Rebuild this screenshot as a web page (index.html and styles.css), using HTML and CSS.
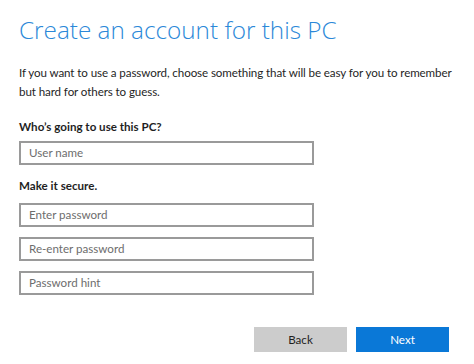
FILE: index.html
```html
<!DOCTYPE html>
<html>
<head>
<meta charset="utf-8">
<link rel="stylesheet" href="styles.css">
</head>
<body>
<main class="page">
  <h1 class="title">Create an account for this PC</h1>
  <p class="intro">If you want to use a password, choose something that will be easy for you to remember but hard for others to guess.</p>
  <h2 class="label">Who’s going to use this PC?</h2>
  <div class="field">User name</div>
  <h2 class="label label-secure">Make it secure.</h2>
  <div class="fields">
    <div class="field">Enter password</div>
    <div class="field">Re-enter password</div>
    <div class="field">Password hint</div>
  </div>
  <div class="actions">
    <button class="btn btn-back">Back</button>
    <button class="btn btn-next">Next</button>
  </div>
</main>
</body>
</html>
```
FILE: styles.css
```css
html, body {
  margin: 0;
  padding: 0;
  background: #ffffff;
}
body {
  width: 474px;
  height: 364px;
  overflow: hidden;
  font-family: "Lato", "Open Sans", sans-serif;
  color: #1f1f1f;
}
.page {
  padding: 12.5px 0 0 19px;
  display: flex;
  flex-direction: column;
}
.title {
  margin: 0;
  font-family: "Open Sans", "Noto Sans", sans-serif;
  font-size: 24.3px;
  font-weight: 300;
  line-height: 34px;
  color: #2b88d8;
}
.intro {
  margin: 16.5px 0 0 0;
  font-size: 11.6px;
  letter-spacing: -0.1px;
  line-height: 19px;
  width: 450px;
}
.label {
  margin: 17.5px 0 0 0;
  font-size: 11.6px;
  font-weight: 700;
  line-height: 16px;
}
.label-secure {
  margin-top: 12.5px;
}
.field {
  box-sizing: border-box;
  width: 295px;
  height: 24px;
  border: 2px solid #9a9a9a;
  margin-top: 6.5px;
  padding: 0 0 0 8px;
  font-size: 11.6px;
  line-height: 20px;
  color: #6d6d6d;
}
.fields {
  display: flex;
  flex-direction: column;
  gap: 10px;
  margin-top: 9.5px;
}
.fields .field {
  margin-top: 0;
}
.actions {
  display: flex;
  gap: 9px;
  margin: 32px 0 0 235px;
}
.btn {
  width: 93px;
  height: 25px;
  border: none;
  font-family: "Lato", "Open Sans", sans-serif;
  font-size: 11.6px;
  padding: 0;
}
.btn-back {
  background: #cccccc;
  color: #1f1f1f;
}
.btn-next {
  background: #0a78d7;
  color: #ffffff;
}
```
